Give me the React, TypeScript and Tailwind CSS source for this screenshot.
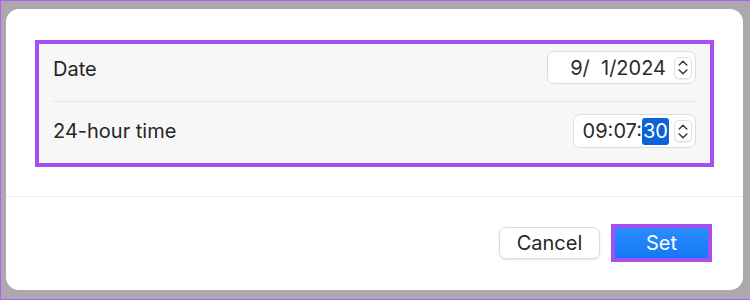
import React from 'react';

const Chevrons: React.FC = () => (
  <div className="flex h-[22px] w-[18px] flex-col items-center justify-center gap-[3px] rounded-[5px] border border-[#e0e0e0] bg-white shadow-[0_1px_1px_rgba(0,0,0,0.08)]">
    <svg width="10" height="6" viewBox="0 0 10 6" fill="none">
      <path d="M1.2 5 L5 1.2 L8.8 5" stroke="#3a3a3a" strokeWidth="1.5" strokeLinecap="round" strokeLinejoin="round" />
    </svg>
    <svg width="10" height="6" viewBox="0 0 10 6" fill="none">
      <path d="M1.2 1 L5 4.8 L8.8 1" stroke="#3a3a3a" strokeWidth="1.5" strokeLinecap="round" strokeLinejoin="round" />
    </svg>
  </div>
);

export default function App() {
  return (
    <div
      className="h-[300px] w-[750px] border-y border-l border-[#b061f0] bg-[#aca8ad] pl-[5px] pt-[8px]"
      style={{ fontFamily: 'Inter, "Liberation Sans", sans-serif' }}
    >
      <div className="flex h-[281px] w-[737px] flex-col rounded-[13px] bg-white">
        {/* settings group */}
        <div className="px-[29px] pb-[29px] pt-[31px]">
          <div className="border-[4px] border-[#a64ff0] bg-[#f7f7f7] px-[14px]">
            <div className="flex items-center justify-between pb-[17px] pt-[7px]">
              <span className="pt-[2px] text-[20px] text-[#262626]">Date</span>
              <div className="flex h-[33px] w-[149px] items-center justify-end gap-[8px] rounded-[7px] border border-[#dcdcdc] bg-white pr-[3px]">
                <span className="whitespace-pre text-[20px] text-[#2a2a2a]">9/  1/2024</span>
                <Chevrons />
              </div>
            </div>
            <div className="h-px bg-[#e6e6e6]" />
            <div className="flex items-center justify-between pb-[15px] pt-[12px]">
              <span className="text-[20px] text-[#262626]">24-hour time</span>
              <div className="flex h-[34px] w-[123px] items-center justify-end gap-[5px] rounded-[7px] border border-[#dcdcdc] bg-white pr-[3px]">
                <span className="flex items-center text-[20px] text-[#2a2a2a]">
                  09:07:
                  <span className="flex h-[27px] items-center rounded-[3px] bg-[#0c63d6] px-[1px] text-white">30</span>
                </span>
                <Chevrons />
              </div>
            </div>
          </div>
        </div>

        <div className="h-px bg-[#ececec]" />

        {/* actions */}
        <div className="flex items-center justify-end gap-[11px] pr-[31px] pt-[27px]">
          <button className="h-[32px] w-[101px] rounded-[7px] border border-[#dcdcdc] bg-white text-[20px] text-[#262626] shadow-[0_1px_2px_rgba(0,0,0,0.12)]">
            Cancel
          </button>
          <div className="h-[38px] w-[101px] border-[4px] border-[#a64ff0]">
            <button className="h-full w-full bg-gradient-to-b from-[#2a8cf9] to-[#1478f6] text-[20px] text-white">
              Set
            </button>
          </div>
        </div>
      </div>
    </div>
  );
}
